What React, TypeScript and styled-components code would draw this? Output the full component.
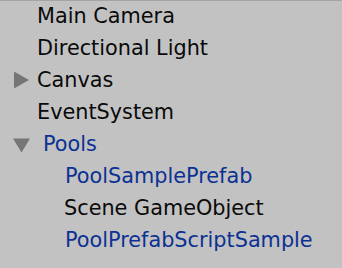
import styled, { createGlobalStyle } from 'styled-components';

const GlobalStyle = createGlobalStyle`
    html, body {
        margin: 0;
        padding: 0;
        background: #c2c2c2;
    }
`;

const Panel = styled.div`
    width: 342px;
    height: 268px;
    background: #c2c2c2;
    box-shadow: inset 0 1px 0 #a4a4a4;
    font-family: "DejaVu Sans", "Liberation Sans", sans-serif;
    font-size: 20.8px;
    overflow: hidden;
`;

const Row = styled.div<{ $indent: number }>`
    display: flex;
    align-items: center;
    height: 32px;
    padding-left: ${p => p.$indent}px;
    position: relative;
`;

const Label = styled.span<{ $prefab?: boolean }>`
    color: ${p => (p.$prefab ? '#0b3193' : '#0a0a0a')};
    line-height: 32px;
    white-space: nowrap;
`;

const Arrow = styled.svg`
    position: absolute;
    left: 13px;
    top: 50%;
    transform: translateY(-50%);
`;

type Item = {
    name: string;
    indent: number;
    prefab?: boolean;
    arrow?: 'right' | 'down';
};

const items: Item[] = [
    { name: 'Main Camera', indent: 37 },
    { name: 'Directional Light', indent: 37 },
    { name: 'Canvas', indent: 37, arrow: 'right' },
    { name: 'EventSystem', indent: 37 },
    { name: 'Pools', indent: 43, prefab: true, arrow: 'down' },
    { name: 'PoolSamplePrefab', indent: 65, prefab: true },
    { name: 'Scene GameObject', indent: 64 },
    { name: 'PoolPrefabScriptSample', indent: 65, prefab: true },
];

export default function App() {
    return (
        <>
            <GlobalStyle />
            <Panel>
                {items.map(item => (
                    <Row key={item.name} $indent={item.indent}>
                        {item.arrow === 'right' && (
                            <Arrow width="17" height="17" viewBox="0 0 17 17">
                                <polygon points="1,0 16,8.5 1,17" fill="#767676" />
                            </Arrow>
                        )}
                        {item.arrow === 'down' && (
                            <Arrow width="17" height="17" viewBox="0 0 17 17" style={{ marginTop: 2 }}>
                                <polygon points="0,1 17,1 8.5,15" fill="#767676" />
                            </Arrow>
                        )}
                        <Label $prefab={item.prefab}>{item.name}</Label>
                    </Row>
                ))}
            </Panel>
        </>
    );
}
